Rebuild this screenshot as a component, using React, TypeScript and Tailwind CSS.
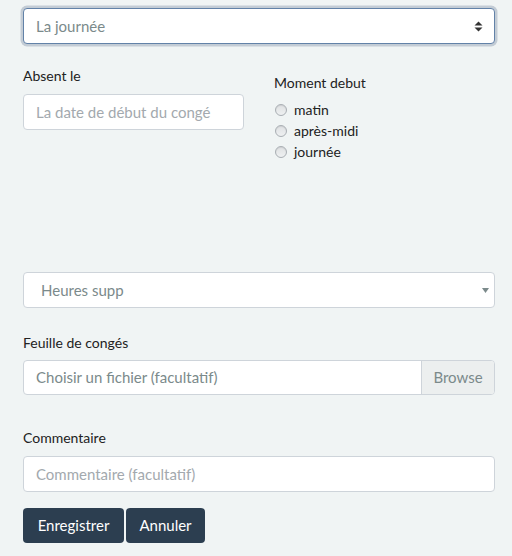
import React from "react";

function Radio({ label }: { label: string }) {
  return (
    <label className="flex items-center h-[21px]">
      <span className="ml-[1px] w-[12px] h-[12px] rounded-full border border-[#a9aeb3] bg-gradient-to-b from-[#dfe1e3] to-[#eef0f1] shadow-[inset_0_1px_1px_rgba(0,0,0,0.08)]" />
      <span className="ml-[7px] text-[14px] text-[#222]">{label}</span>
    </label>
  );
}

export default function App() {
  return (
    <div
      className="min-h-screen w-[512px] bg-[#f0f4f4] pl-[23px] pt-[8px]"
      style={{ fontFamily: "Lato, 'Open Sans', sans-serif" }}
    >
      <div className="w-[472px]">
        {/* top select */}
        <div className="h-[36px] rounded-[4px] border border-[#6282a8] bg-white shadow-[0_0_0_2.5px_#c3ccd5] flex items-center justify-between pl-[12px] pr-[11px]">
          <span className="text-[15px] text-[#7b8a8b]">La journée</span>
          <svg width="9" height="11" viewBox="0 0 9 11">
            <path d="M4.5 0.5 L8.5 4.5 L0.5 4.5 Z" fill="#333" />
            <path d="M4.5 10.5 L8.5 6.5 L0.5 6.5 Z" fill="#333" />
          </svg>
        </div>

        {/* row */}
        <div className="mt-[21px] grid grid-cols-2 gap-x-[30px]">
          <div>
            <div className="h-[21px] leading-[21px] text-[14px] text-[#222]">Absent le</div>
            <div className="mt-[8px] h-[36px] rounded-[4px] border border-[#ced4da] bg-white flex items-center pl-[12px]">
              <span className="text-[15px] text-[#a3a9ae]">La date de début du congé</span>
            </div>
          </div>
          <div className="pt-[7px]">
            <div className="h-[21px] leading-[21px] text-[14px] text-[#222]">Moment debut</div>
            <div className="mt-[6px] flex flex-col">
              <Radio label="matin" />
              <Radio label="après-midi" />
              <Radio label="journée" />
            </div>
          </div>
        </div>

        {/* Heures supp select */}
        <div className="mt-[110px] h-[36px] rounded-[4px] border border-[#ced4da] bg-white flex items-center justify-between pl-[17px] pr-[5px]">
          <span className="text-[15px] text-[#7b8a8b]">Heures supp</span>
          <svg width="7" height="5" viewBox="0 0 7 5">
            <path d="M0 0 L7 0 L3.5 5 Z" fill="#7b8a8b" />
          </svg>
        </div>

        {/* Feuille de congés */}
        <div className="mt-[24px] h-[21px] leading-[21px] text-[14px] text-[#222]">Feuille de congés</div>
        <div className="mt-[7px] h-[35px] rounded-[4px] border border-[#ced4da] bg-white flex overflow-hidden">
          <div className="flex-1 flex items-center pl-[12px]">
            <span className="text-[15px] text-[#7b8a8b]">Choisir un fichier (facultatif)</span>
          </div>
          <div className="w-[73px] border-l border-[#ced4da] bg-[#ecefef] flex items-center justify-center">
            <span className="text-[15px] text-[#7b8a8b]">Browse</span>
          </div>
        </div>

        {/* Commentaire */}
        <div className="mt-[32px] h-[21px] leading-[21px] text-[14px] text-[#222]">Commentaire</div>
        <div className="mt-[8px] h-[36px] rounded-[4px] border border-[#ced4da] bg-white flex items-center pl-[12px]">
          <span className="text-[15px] text-[#a3a9ae]">Commentaire (facultatif)</span>
        </div>

        {/* Buttons */}
        <div className="mt-[16px] flex gap-[2px]">
          <button className="h-[35px] w-[101px] rounded-[4px] bg-[#2c3e50] text-white text-[15px]">Enregistrer</button>
          <button className="h-[35px] w-[79px] rounded-[4px] bg-[#2c3e50] text-white text-[15px]">Annuler</button>
        </div>
      </div>
    </div>
  );
}
